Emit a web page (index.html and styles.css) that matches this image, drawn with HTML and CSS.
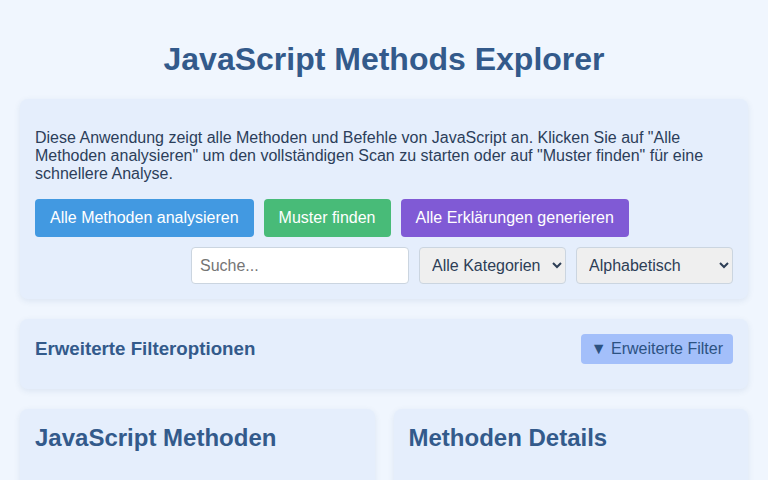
FILE: index.html
```html
<!DOCTYPE html>
<html lang="de">
<head>
<meta charset="utf-8">
<title>JavaScript Methods Explorer</title>
<link rel="stylesheet" href="styles.css">
</head>
<body>
<div class="container">
  <h1 class="title">JavaScript Methods Explorer</h1>
  <section class="card intro">
    <p class="intro-text">Diese Anwendung zeigt alle Methoden und Befehle von JavaScript an. Klicken Sie auf "Alle Methoden analysieren" um den vollständigen Scan zu starten oder auf "Muster finden" für eine schnellere Analyse.</p>
    <div class="actions">
      <button class="btn btn-blue">Alle Methoden analysieren</button>
      <button class="btn btn-green">Muster finden</button>
      <button class="btn btn-purple">Alle Erklärungen generieren</button>
    </div>
    <div class="controls">
      <input class="search" type="text" placeholder="Suche...">
      <select class="select select-cat"><option>Alle Kategorien</option></select>
      <select class="select select-sort"><option>Alphabetisch</option></select>
    </div>
  </section>
  <section class="card filters">
    <div class="filters-head">
      <h3 class="filters-title">Erweiterte Filteroptionen</h3>
      <button class="btn-toggle">▼ Erweiterte Filter</button>
    </div>
  </section>
  <div class="columns">
    <section class="card col">
      <h2 class="col-title">JavaScript Methoden</h2>
    </section>
    <section class="card col">
      <h2 class="col-title">Methoden Details</h2>
    </section>
  </div>
</div>
</body>
</html>
```
FILE: styles.css
```css
html, body {
  margin: 0;
  padding: 0;
}
body {
  background: #f0f6fe;
  font-family: "Liberation Sans", Arial, sans-serif;
  color: #2c3e5a;
}
.container {
  padding: 18px 20px 20px;
}
.title {
  margin: 23px 0 21px;
  text-align: center;
  font-size: 32px;
  font-weight: bold;
  color: #335a8b;
}
.card {
  background: #e5eefc;
  border-radius: 8px;
  padding: 15px;
  box-shadow: 0 2px 6px rgba(40, 80, 140, 0.10);
  margin-bottom: 20px;
}
.intro-text {
  margin: 15px 0 16px;
  font-size: 16px;
  line-height: 18px;
}
.actions {
  display: flex;
  gap: 10px;
  margin-bottom: 10px;
}
.btn {
  font-family: inherit;
  font-size: 16px;
  line-height: 18px;
  padding: 10px 15px;
  border: none;
  border-radius: 4px;
  color: #fff;
}
.btn-blue { background: #4299e1; }
.btn-green { background: #48bb78; }
.btn-purple { background: #805ad5; }
.controls {
  display: flex;
  justify-content: flex-end;
  gap: 10px;
}
.search {
  width: 218px;
  box-sizing: border-box;
  height: 37px;
  padding: 8px;
  font-family: inherit;
  font-size: 16px;
  border: 1px solid #cbd5e0;
  border-radius: 4px;
  background: #fff;
  color: #2d3748;
}
.search::placeholder { color: #757575; }
.select {
  height: 37px;
  box-sizing: border-box;
  padding: 0 4px 0 8px;
  font-family: inherit;
  font-size: 16px;
  border: 1px solid #cbd5e0;
  border-radius: 4px;
  background: #efefef;
  color: #2d3e56;
}
.select-cat { width: 147px; }
.select-sort { width: 157px; }
.filters { padding-bottom: 25px; }
.filters-head {
  display: flex;
  justify-content: space-between;
  align-items: center;
}
.filters-title {
  margin: 0;
  font-size: 18.72px;
  color: #335a8b;
}
.btn-toggle {
  font-family: inherit;
  font-size: 16px;
  line-height: 18px;
  padding: 6px 10px;
  border: none;
  border-radius: 4px;
  background: #a3bffa;
  color: #2c5282;
}
.columns {
  display: grid;
  grid-template-columns: 1fr 1fr;
  gap: 19px;
}
.col {
  min-height: 120px;
  margin-bottom: 0;
}
.col-title {
  margin: 0;
  font-size: 24px;
  color: #335a8b;
}
```
